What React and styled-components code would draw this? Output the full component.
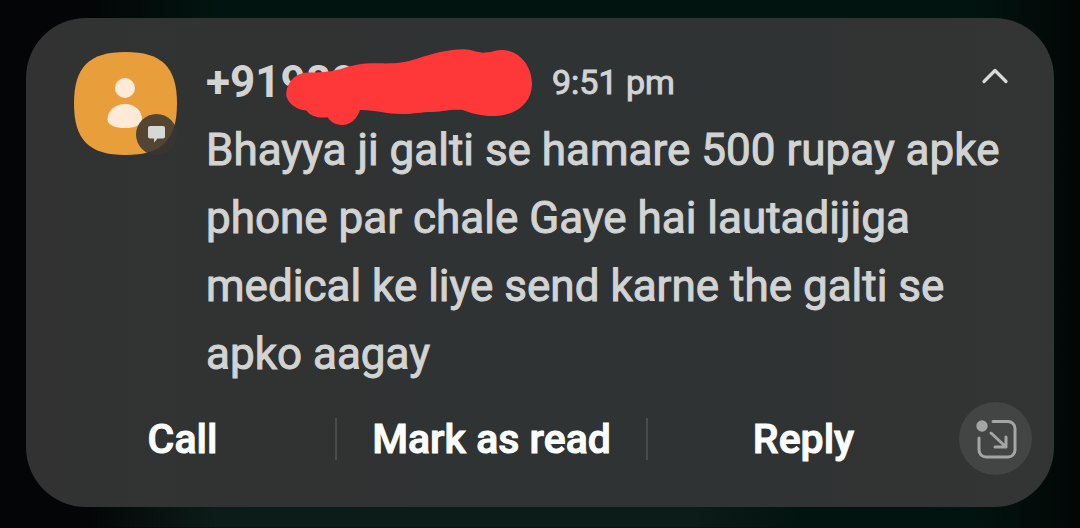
import styled, { createGlobalStyle } from "styled-components";

const actions = ["Call", "Mark as read", "Reply"];

const App = () => (
  <>
    <GlobalStyle />
    <Card>
      <Content>
        <Avatar>
          <AvatarIcon />
          <Badge>
            <BubbleIcon />
          </Badge>
        </Avatar>
        <Details>
          <Header>
            <Sender>
              +91989
              <Redaction />
            </Sender>
            <Time>9:51 pm</Time>
            <CollapseButton aria-label="Collapse">
              <ChevronIcon />
            </CollapseButton>
          </Header>
          <Message>
            Bhayya ji galti se hamare 500 rupay apke phone par chale Gaye hai
            lautadijiga medical ke liye send karne the galti se apko aagay
          </Message>
        </Details>
      </Content>
      <Actions>
        {actions.map((label) => (
          <ActionButton key={label}>{label}</ActionButton>
        ))}
        <PopupButton aria-label="Open in pop-up view">
          <PopupIcon />
        </PopupButton>
      </Actions>
    </Card>
  </>
);

export default App;

// Icons
const AvatarIcon = () => (
  <svg width="103" height="103" viewBox="0 0 103 103" aria-hidden="true">
    <path
      d="M51.5 0C88 0 103 15 103 51.5S88 103 51.5 103 0 88 0 51.5 15 0 51.5 0z"
      fill="#e89e3a"
    />
    <circle cx="51" cy="36" r="10" fill="#feead6" />
    <path
      d="M51 52c10 0 17 7 17 15.500c0 6-8 8.500-17 8.500s-17.500-2.500-17.500-8.500C33.500 59 41 52 51 52z"
      fill="#feead6"
    />
  </svg>
);

const BubbleIcon = () => (
  <svg width="17" height="17" viewBox="0 0 17 17" aria-hidden="true">
    <path
      d="M2 0h13a2 2 0 0 1 2 2v8.500a2 2 0 0 1-2 2H9.500L6 16.500V12.500H2a2 2 0 0 1-2-2V2a2 2 0 0 1 2-2z"
      fill="#d6d8d4"
    />
  </svg>
);

const ChevronIcon = () => (
  <svg width="28" height="18" viewBox="0 0 28 18" aria-hidden="true">
    <path
      d="M3 14.500L14 3.500l11 11"
      fill="none"
      stroke="#d8d9d9"
      strokeWidth="3.200"
      strokeLinecap="round"
      strokeLinejoin="round"
    />
  </svg>
);

const PopupIcon = () => (
  <svg width="42" height="42" viewBox="0 0 42 42" aria-hidden="true">
    <circle cx="7" cy="8" r="5.700" fill="#a4a5a5" />
    <g
      fill="none"
      stroke="#a4a5a5"
      strokeWidth="3"
      strokeLinecap="round"
      strokeLinejoin="round"
    >
      <path d="M18 3.500h15a7 7 0 0 1 7 7V32a7 7 0 0 1-7 7H11a7 7 0 0 1-7-7V20" />
      <path d="M16 15l14.500 13.500M31 19v10H20" />
    </g>
  </svg>
);

const Redaction = () => (
  <Scribble viewBox="0 0 738 228" aria-hidden="true">
    <path
      d="M1 132C2 108 20 76 57 71C105 70 125 70 165 60C215 43 240 43 280 43C325 44 350 42 390 30C440 14 485 1 535 1C555 1 570 10 590 11C615 11 625 4 645 3C700 3 737 50 738 103C739 158 695 200 625 201C590 202 560 194 530 183C495 180 475 187 440 189C400 189 390 195 347 195C300 195 265 182 222 183C213 210 195 227 169 228C145 228 132 216 125 205C95 208 72 200 62 185C30 183 -1 160 1 132z"
      fill="#fe3838"
    />
  </Scribble>
);

// Styles
const GlobalStyle = createGlobalStyle`
  * {
    box-sizing: border-box;
  }

  body {
    margin: 0;
    padding: 18px 26px 20px;
    font-family: Roboto, "Liberation Sans", sans-serif;
    background:
      linear-gradient(90deg, #030506 8%, transparent 20%, transparent 90%, #020605 100%),
      linear-gradient(180deg, #02140f 20%, transparent 80%),
      linear-gradient(90deg, #0c1c18 64%, #02140f 74%);
  }
`;

const Card = styled.article`
  padding: 34px 0 32px;
  border-radius: 60px;
  background: linear-gradient(90deg, #323232, #303333 40%, #303333 70%, #333434);
`;

const Content = styled.div`
  display: flex;
  gap: 29px;
  padding: 0 35px 0 48px;
`;

const Avatar = styled.div`
  position: relative;
  flex: none;
  width: 103px;
  height: 103px;
`;

const Badge = styled.span`
  position: absolute;
  right: 0;
  bottom: 0;
  display: flex;
  align-items: center;
  justify-content: center;
  width: 41px;
  height: 41px;
  border-radius: 50%;
  background: rgba(56, 53, 49, 0.85);
`;

const Details = styled.div`
  flex: 1;
  min-width: 0;
`;

const Header = styled.header`
  display: flex;
  align-items: center;
  height: 60px;
  color: #d2d3d3;
`;

const Sender = styled.strong`
  position: relative;
  min-width: 346px;
  font-size: 44px;
  font-weight: 700;
  line-height: 60px;
`;

const Scribble = styled.svg`
  position: absolute;
  top: -3px;
  left: 80px;
  width: 246px;
  height: 76px;
`;

const Time = styled.time`
  font-size: 34px;
  line-height: 60px;
  -webkit-text-stroke: 1px currentColor;
`;

const CollapseButton = styled.button`
  display: flex;
  align-items: center;
  justify-content: center;
  width: 48px;
  height: 48px;
  margin: 0 0 12px auto;
  padding: 0;
  border: none;
  background: none;
  cursor: pointer;
`;

const Message = styled.p`
  margin: 4px 0 14px;
  color: #d2d3d3;
  font-size: 44px;
  line-height: 68px;
  -webkit-text-stroke: 1px currentColor;
`;

const Actions = styled.footer`
  display: grid;
  grid-template-columns: repeat(3, 1fr) 73px;
  align-items: center;
  padding: 0 22px 0 0;
`;

const ActionButton = styled.button`
  height: 42px;
  padding: 0;
  border: none;
  background: none;
  color: #fcfdfd;
  font-family: inherit;
  font-size: 41px;
  font-weight: 500;
  line-height: 40px;
  white-space: nowrap;
  cursor: pointer;
  -webkit-text-stroke: 1px currentColor;

  &:first-child {
    padding-left: 4px;
  }

  &:nth-child(-n + 2) {
    border-right: 2px solid #4a4c4c;
  }
`;

const PopupButton = styled.button`
  display: flex;
  align-items: center;
  justify-content: center;
  width: 73px;
  height: 73px;
  padding: 0;
  border: none;
  border-radius: 50%;
  background: #434545;
  cursor: pointer;
`;
